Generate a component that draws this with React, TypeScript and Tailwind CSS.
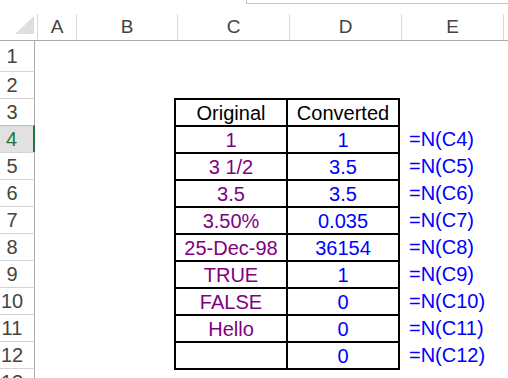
const cols = [
  { label: 'A', w: 'w-[39px]' },
  { label: 'B', w: 'w-[101px]' },
  { label: 'C', w: 'w-[112px]' },
  { label: 'D', w: 'w-[112px]' },
  { label: 'E', w: 'w-[102px]' },
];

type Row = { n: number; orig?: string; conv?: string; formula?: string; head?: boolean };

const rows: Row[] = [
  { n: 1 },
  { n: 2 },
  { n: 3, orig: 'Original', conv: 'Converted', head: true },
  { n: 4, orig: '1', conv: '1', formula: '=N(C4)' },
  { n: 5, orig: '3 1/2', conv: '3.5', formula: '=N(C5)' },
  { n: 6, orig: '3.5', conv: '3.5', formula: '=N(C6)' },
  { n: 7, orig: '3.50%', conv: '0.035', formula: '=N(C7)' },
  { n: 8, orig: '25-Dec-98', conv: '36154', formula: '=N(C8)' },
  { n: 9, orig: 'TRUE', conv: '1', formula: '=N(C9)' },
  { n: 10, orig: 'FALSE', conv: '0', formula: '=N(C10)' },
  { n: 11, orig: 'Hello', conv: '0', formula: '=N(C11)' },
  { n: 12, orig: '', conv: '0', formula: '=N(C12)' },
  { n: 13 },
];

export default function App() {
  return (
    <div className="w-[508px] h-[378px] overflow-hidden bg-white font-['Liberation_Sans',Arial,sans-serif]">
      {/* formula bar edge */}
      <div className="h-[14px] flex justify-end">
        <div className="w-[262px] h-[4px] border-l border-b border-[#c6c6c6]" />
      </div>

      {/* column headers */}
      <div className="flex h-[27px] border-b border-[#ababab] text-[19px] text-[#444]">
        <div className="w-[37px] flex items-end pb-[3px]">
          <svg width="37" height="22" viewBox="0 0 37 22">
            <polygon points="34,1 34,19 15,19" fill="#dfdfdf" />
          </svg>
        </div>
        {cols.map((c) => (
          <div key={c.label} className={`${c.w} border-l border-[#dadada] flex items-center justify-center`}>
            {c.label}
          </div>
        ))}
        <div className="flex-1 border-l border-[#dadada]" />
      </div>

      {/* rows */}
      {rows.map((r) => {
        const inTable = r.n >= 3 && r.n <= 12;
        const tableTop = r.n >= 3 && r.n <= 13;
        const active = r.n === 4;
        return (
          <div key={r.n} className={`flex ${r.n === 1 ? 'h-[30px]' : 'h-[27px]'}`}>
            <div
              className={`w-[35px] pr-[10px] flex items-center justify-center text-[20px] ${
                r.n === 1 ? '' : 'border-t'
              } ${
                active
                  ? 'bg-[#e1e1e1] text-[#217346] border-r-2 border-r-[#217346] border-t-[#bdbdbd]'
                  : 'text-[#444] border-r border-r-[#ababab] border-t-[#d4d4d4]'
              }`}
            >
              {r.n}
            </div>
            <div className="w-[39px]" />
            <div className="w-[100px]" />
            <div
              className={`w-[112px] flex items-center justify-center text-[20px] ${
                tableTop ? 'border-t-2 border-black' : ''
              } ${inTable ? 'border-l-2 border-black' : ''} ${r.head ? 'text-black' : 'text-[#800080]'}`}
            >
              {r.orig}
            </div>
            <div
              className={`w-[114px] flex items-center justify-center text-[20px] ${
                tableTop ? 'border-t-2 border-black' : ''
              } ${inTable ? 'border-x-2 border-black' : ''} ${r.head ? 'text-black' : 'text-[#0000ff]'}`}
            >
              {r.conv}
            </div>
            <div className="flex-1 flex items-center pl-[9px] text-[20px] text-[#0000ff]">{r.formula}</div>
          </div>
        );
      })}
    </div>
  );
}
